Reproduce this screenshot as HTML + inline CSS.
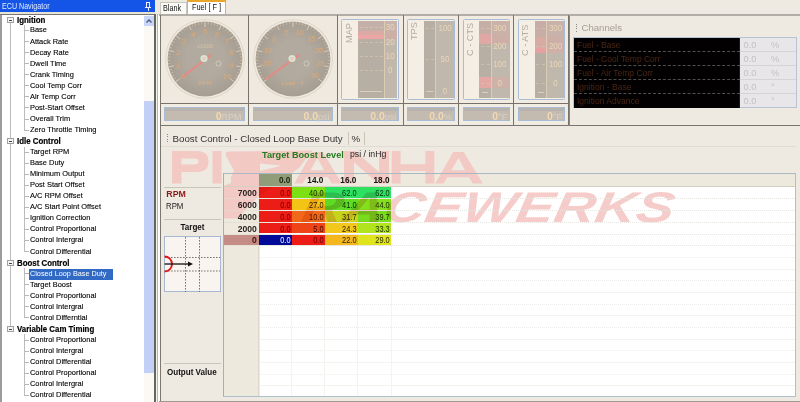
<!DOCTYPE html><html><head><meta charset="utf-8"><style>
*{margin:0;padding:0;box-sizing:border-box}
html,body{width:800px;height:402px;overflow:hidden;background:#EFEAE1;font-family:"Liberation Sans",sans-serif;position:relative}
.a{position:absolute}
.t{position:absolute;white-space:nowrap;line-height:1}
.ti{position:absolute;font-size:8px;color:#000;white-space:nowrap;line-height:1;transform-origin:0 0;transform:scaleX(0.93);-webkit-text-stroke-width:0.12px}
.tc{position:absolute;font-size:8.5px;font-weight:bold;color:#000;white-space:nowrap;line-height:1;transform-origin:0 0;transform:scaleX(0.925);-webkit-text-stroke-width:0.2px}
.mb{position:absolute;width:7px;height:6px;border:1px solid #a0a0a0;background:#f4f4f0}
.mb:after{content:"";position:absolute;left:1px;top:2px;width:3px;height:1px;background:#444}
.hl{position:absolute;height:0;width:5px;border-top:1px solid #b8b8b8}
.vl{position:absolute;width:0;border-left:1px solid #bcbcbc}
</style></head><body>
<div class="a" style="left:0;top:0;width:155px;height:12px;background:#1454E6"></div>
<div class="t" style="left:2px;top:2.8px;font-size:8.2px;color:#e4ecff;transform-origin:0 0;transform:scaleX(0.87)">ECU Navigator</div>
<div class="a" style="left:146px;top:2px;width:4px;height:6px;border:1px solid #eef;border-top-width:1px"></div>
<div class="a" style="left:145px;top:7px;width:6px;height:1px;background:#eef"></div>
<div class="a" style="left:147.5px;top:8px;width:1px;height:3px;background:#eef"></div>
<div class="a" style="left:0;top:12px;width:155px;height:2px;background:#e8e4d4"></div>
<div class="a" style="left:0;top:14px;width:155px;height:1px;background:#777"></div>
<div class="a" style="left:0;top:15px;width:155px;height:387px;background:#fff"></div>
<div class="a" style="left:0;top:15px;width:1.6px;height:387px;background:#9c9c9c"></div>
<div class="a" style="left:154.1px;top:14px;width:1.5px;height:388px;background:#626660"></div>
<div class="a" style="left:144px;top:15px;width:9.5px;height:387px;background:#faf9f4"></div>
<div class="a" style="left:144px;top:15.5px;width:9.5px;height:10px;background:#c8d5f6"></div>
<svg class="a" style="left:144px;top:15.5px" width="10" height="10"><path d="M2.5 6.5 L5 4 L7.5 6.5" stroke="#4a5c80" stroke-width="1.4" fill="none"/></svg>
<div class="a" style="left:144px;top:101px;width:9.5px;height:271.5px;background:#c2d0f8"></div>
<div class="vl" style="left:10px;top:23px;height:305px"></div>
<div class="vl" style="left:23.5px;top:25.0px;height:104.5px"></div>
<div class="vl" style="left:23.5px;top:146.6px;height:104.5px"></div>
<div class="vl" style="left:23.5px;top:268.1px;height:49.2px"></div>
<div class="vl" style="left:23.5px;top:334.4px;height:60.3px"></div>
<div class="mb" style="left:7px;top:16.5px"></div>
<div class="tc" style="left:17px;top:15.5px">Ignition</div>
<div class="hl" style="left:24px;top:30.0px"></div>
<div class="ti" style="left:30px;top:26.4px">Base</div>
<div class="hl" style="left:24px;top:41.1px"></div>
<div class="ti" style="left:30px;top:37.5px">Attack Rate</div>
<div class="hl" style="left:24px;top:52.2px"></div>
<div class="ti" style="left:30px;top:48.6px">Decay Rate</div>
<div class="hl" style="left:24px;top:63.2px"></div>
<div class="ti" style="left:30px;top:59.6px">Dwell Time</div>
<div class="hl" style="left:24px;top:74.2px"></div>
<div class="ti" style="left:30px;top:70.7px">Crank Timing</div>
<div class="hl" style="left:24px;top:85.3px"></div>
<div class="ti" style="left:30px;top:81.7px">Cool Temp Corr</div>
<div class="hl" style="left:24px;top:96.4px"></div>
<div class="ti" style="left:30px;top:92.8px">Air Temp Corr</div>
<div class="hl" style="left:24px;top:107.4px"></div>
<div class="ti" style="left:30px;top:103.8px">Post-Start Offset</div>
<div class="hl" style="left:24px;top:118.5px"></div>
<div class="ti" style="left:30px;top:114.9px">Overall Trim</div>
<div class="hl" style="left:24px;top:129.5px"></div>
<div class="ti" style="left:30px;top:125.9px">Zero Throttle Timing</div>
<div class="mb" style="left:7px;top:138.1px"></div>
<div class="tc" style="left:17px;top:137.1px">Idle Control</div>
<div class="hl" style="left:24px;top:151.6px"></div>
<div class="ti" style="left:30px;top:148.0px">Target RPM</div>
<div class="hl" style="left:24px;top:162.7px"></div>
<div class="ti" style="left:30px;top:159.1px">Base Duty</div>
<div class="hl" style="left:24px;top:173.7px"></div>
<div class="ti" style="left:30px;top:170.1px">Minimum Output</div>
<div class="hl" style="left:24px;top:184.8px"></div>
<div class="ti" style="left:30px;top:181.2px">Post Start Offset</div>
<div class="hl" style="left:24px;top:195.8px"></div>
<div class="ti" style="left:30px;top:192.2px">A/C RPM Offset</div>
<div class="hl" style="left:24px;top:206.9px"></div>
<div class="ti" style="left:30px;top:203.3px">A/C Start Point Offset</div>
<div class="hl" style="left:24px;top:217.9px"></div>
<div class="ti" style="left:30px;top:214.3px">Ignition Correction</div>
<div class="hl" style="left:24px;top:229.0px"></div>
<div class="ti" style="left:30px;top:225.4px">Control Proportional</div>
<div class="hl" style="left:24px;top:240.0px"></div>
<div class="ti" style="left:30px;top:236.4px">Control Intergral</div>
<div class="hl" style="left:24px;top:251.1px"></div>
<div class="ti" style="left:30px;top:247.5px">Control Differential</div>
<div class="mb" style="left:7px;top:259.6px"></div>
<div class="tc" style="left:17px;top:258.6px">Boost Control</div>
<div class="hl" style="left:24px;top:273.1px"></div>
<div class="a" style="left:29.2px;top:269.0px;width:84.3px;height:10.5px;background:#316AC5"></div>
<div class="ti" style="left:30px;top:269.5px;color:#fff;-webkit-text-stroke-width:0;transform:scaleX(0.91)">Closed Loop Base Duty</div>
<div class="hl" style="left:24px;top:284.2px"></div>
<div class="ti" style="left:30px;top:280.6px">Target Boost</div>
<div class="hl" style="left:24px;top:295.2px"></div>
<div class="ti" style="left:30px;top:291.6px">Control Proportional</div>
<div class="hl" style="left:24px;top:306.3px"></div>
<div class="ti" style="left:30px;top:302.7px">Control Intergral</div>
<div class="hl" style="left:24px;top:317.4px"></div>
<div class="ti" style="left:30px;top:313.8px">Control Differntial</div>
<div class="mb" style="left:7px;top:325.9px"></div>
<div class="tc" style="left:17px;top:324.9px">Variable Cam Timing</div>
<div class="hl" style="left:24px;top:339.5px"></div>
<div class="ti" style="left:30px;top:335.9px">Control Proportional</div>
<div class="hl" style="left:24px;top:350.5px"></div>
<div class="ti" style="left:30px;top:346.9px">Control Intergral</div>
<div class="hl" style="left:24px;top:361.6px"></div>
<div class="ti" style="left:30px;top:357.9px">Control Differential</div>
<div class="hl" style="left:24px;top:372.6px"></div>
<div class="ti" style="left:30px;top:369.0px">Control Proportional</div>
<div class="hl" style="left:24px;top:383.7px"></div>
<div class="ti" style="left:30px;top:380.1px">Control Intergral</div>
<div class="hl" style="left:24px;top:394.7px"></div>
<div class="ti" style="left:30px;top:391.1px">Control Differential</div>
<div class="a" style="left:155.6px;top:14px;width:1.2px;height:388px;background:#f4f4ea"></div>
<div class="a" style="left:156.8px;top:14px;width:1.1px;height:388px;background:#b4b4b2"></div>
<div class="a" style="left:157.9px;top:15px;width:2.1px;height:387px;background:#fbfbf8"></div>
<div class="a" style="left:159.5px;top:1.5px;width:27px;height:13px;background:#fbfaf6;border:1px solid #c8c6bc;border-bottom:none"></div>
<div class="t" style="left:163px;top:4.2px;font-size:8.4px;color:#111;transform-origin:0 0;transform:scaleX(0.86)">Blank</div>
<div class="a" style="left:186.5px;top:0;width:39.5px;height:15px;background:#fff;border:1px solid #b8b6aa;border-bottom:none;border-top:none"></div>
<div class="a" style="left:186.5px;top:0;width:39.5px;height:2px;background:#E8A62A"></div>
<div class="t" style="left:191.5px;top:2.6px;font-size:8.4px;color:#111;transform-origin:0 0;transform:scaleX(0.88)">Fuel [ F ]</div>
<div class="a" style="left:159px;top:14px;width:641px;height:1.5px;background:#b0aea6"></div>
<div class="a" style="left:226px;top:14px;width:574px;height:1.5px;background:#b0aea6"></div>
<div class="a" style="left:160px;top:15px;width:1.2px;height:387px;background:#7c7870"></div>
<div class="a" style="left:247.9px;top:15px;width:1.2px;height:110px;background:#77726b"></div>
<div class="a" style="left:336.9px;top:15px;width:1.2px;height:110px;background:#77726b"></div>
<div class="a" style="left:402.9px;top:15px;width:1.2px;height:110px;background:#77726b"></div>
<div class="a" style="left:457.9px;top:15px;width:1.2px;height:110px;background:#77726b"></div>
<div class="a" style="left:512.9px;top:15px;width:1.2px;height:110px;background:#77726b"></div>
<div class="a" style="left:567.9px;top:15px;width:1.2px;height:110px;background:#77726b"></div>
<div class="a" style="left:161px;top:102.7px;width:408px;height:1.2px;background:#77726b"></div>
<div class="a" style="left:161px;top:124.9px;width:639px;height:1.3px;background:#7a756e"></div>
<div class="a" style="left:161.5px;top:15.5px;width:86.5px;height:87px;background:#efe9df"></div>
<div class="a" style="left:249.0px;top:15.5px;width:88.0px;height:87px;background:#efe9df"></div>
<svg class="a" style="left:163.0px;top:16.5px" width="84" height="84" viewBox="-42 -42 84 84"><defs><radialGradient id="gf205"><stop offset="0.5" stop-color="#b3aa9f"/><stop offset="1" stop-color="#a79e93"/></radialGradient></defs><circle r="39.8" fill="#ddd3c6"/><circle r="39" fill="#f0e9de"/><circle r="37.4" fill="url(#gf205)"/><line x1="-29.16" y1="22.78" x2="-25.22" y2="19.70" stroke="#dccbb2" stroke-width="1.0"/><line x1="-31.07" y1="20.09" x2="-29.23" y2="18.89" stroke="#dccbb2" stroke-width="0.6"/><line x1="-32.74" y1="17.23" x2="-30.79" y2="16.21" stroke="#dccbb2" stroke-width="0.6"/><line x1="-34.15" y1="14.24" x2="-32.12" y2="13.40" stroke="#dccbb2" stroke-width="0.6"/><line x1="-35.28" y1="11.14" x2="-33.19" y2="10.48" stroke="#dccbb2" stroke-width="0.6"/><line x1="-36.14" y1="7.95" x2="-31.25" y2="6.87" stroke="#dccbb2" stroke-width="1.0"/><line x1="-36.70" y1="4.69" x2="-34.52" y2="4.41" stroke="#dccbb2" stroke-width="0.6"/><line x1="-36.97" y1="1.39" x2="-34.78" y2="1.31" stroke="#dccbb2" stroke-width="0.6"/><line x1="-36.95" y1="-1.91" x2="-34.75" y2="-1.80" stroke="#dccbb2" stroke-width="0.6"/><line x1="-36.63" y1="-5.20" x2="-34.45" y2="-4.89" stroke="#dccbb2" stroke-width="0.6"/><line x1="-36.02" y1="-8.45" x2="-31.15" y2="-7.31" stroke="#dccbb2" stroke-width="1.0"/><line x1="-35.12" y1="-11.63" x2="-33.04" y2="-10.94" stroke="#dccbb2" stroke-width="0.6"/><line x1="-33.95" y1="-14.72" x2="-31.93" y2="-13.84" stroke="#dccbb2" stroke-width="0.6"/><line x1="-32.50" y1="-17.69" x2="-30.57" y2="-16.64" stroke="#dccbb2" stroke-width="0.6"/><line x1="-30.79" y1="-20.52" x2="-28.96" y2="-19.30" stroke="#dccbb2" stroke-width="0.6"/><line x1="-28.84" y1="-23.18" x2="-24.94" y2="-20.05" stroke="#dccbb2" stroke-width="1.0"/><line x1="-26.65" y1="-25.67" x2="-25.07" y2="-24.14" stroke="#dccbb2" stroke-width="0.6"/><line x1="-24.25" y1="-27.94" x2="-22.81" y2="-26.28" stroke="#dccbb2" stroke-width="0.6"/><line x1="-21.66" y1="-29.99" x2="-20.38" y2="-28.21" stroke="#dccbb2" stroke-width="0.6"/><line x1="-18.90" y1="-31.81" x2="-17.78" y2="-29.92" stroke="#dccbb2" stroke-width="0.6"/><line x1="-15.99" y1="-33.37" x2="-13.83" y2="-28.86" stroke="#dccbb2" stroke-width="1.0"/><line x1="-12.95" y1="-34.66" x2="-12.18" y2="-32.60" stroke="#dccbb2" stroke-width="0.6"/><line x1="-9.80" y1="-35.68" x2="-9.22" y2="-33.56" stroke="#dccbb2" stroke-width="0.6"/><line x1="-6.58" y1="-36.41" x2="-6.19" y2="-34.25" stroke="#dccbb2" stroke-width="0.6"/><line x1="-3.30" y1="-36.85" x2="-3.11" y2="-34.66" stroke="#dccbb2" stroke-width="0.6"/><line x1="0.00" y1="-37.00" x2="0.00" y2="-32.00" stroke="#dccbb2" stroke-width="1.0"/><line x1="3.30" y1="-36.85" x2="3.11" y2="-34.66" stroke="#dccbb2" stroke-width="0.6"/><line x1="6.58" y1="-36.41" x2="6.19" y2="-34.25" stroke="#dccbb2" stroke-width="0.6"/><line x1="9.80" y1="-35.68" x2="9.22" y2="-33.56" stroke="#dccbb2" stroke-width="0.6"/><line x1="12.95" y1="-34.66" x2="12.18" y2="-32.60" stroke="#dccbb2" stroke-width="0.6"/><line x1="15.99" y1="-33.37" x2="13.83" y2="-28.86" stroke="#dccbb2" stroke-width="1.0"/><line x1="18.90" y1="-31.81" x2="17.78" y2="-29.92" stroke="#dccbb2" stroke-width="0.6"/><line x1="21.66" y1="-29.99" x2="20.38" y2="-28.21" stroke="#dccbb2" stroke-width="0.6"/><line x1="24.25" y1="-27.94" x2="22.81" y2="-26.28" stroke="#dccbb2" stroke-width="0.6"/><line x1="26.65" y1="-25.67" x2="25.07" y2="-24.14" stroke="#dccbb2" stroke-width="0.6"/><line x1="28.84" y1="-23.18" x2="24.94" y2="-20.05" stroke="#dccbb2" stroke-width="1.0"/><line x1="30.79" y1="-20.52" x2="28.96" y2="-19.30" stroke="#dccbb2" stroke-width="0.6"/><line x1="32.50" y1="-17.69" x2="30.57" y2="-16.64" stroke="#dccbb2" stroke-width="0.6"/><line x1="33.95" y1="-14.72" x2="31.93" y2="-13.84" stroke="#dccbb2" stroke-width="0.6"/><line x1="35.12" y1="-11.63" x2="33.04" y2="-10.94" stroke="#dccbb2" stroke-width="0.6"/><line x1="36.02" y1="-8.45" x2="31.15" y2="-7.31" stroke="#dccbb2" stroke-width="1.0"/><line x1="36.63" y1="-5.20" x2="34.45" y2="-4.89" stroke="#dccbb2" stroke-width="0.6"/><line x1="36.95" y1="-1.91" x2="34.75" y2="-1.80" stroke="#dccbb2" stroke-width="0.6"/><line x1="36.97" y1="1.39" x2="34.78" y2="1.31" stroke="#dccbb2" stroke-width="0.6"/><line x1="36.70" y1="4.69" x2="34.52" y2="4.41" stroke="#dccbb2" stroke-width="0.6"/><line x1="36.14" y1="7.95" x2="31.25" y2="6.87" stroke="#dccbb2" stroke-width="1.0"/><line x1="35.28" y1="11.14" x2="33.19" y2="10.48" stroke="#dccbb2" stroke-width="0.6"/><line x1="34.15" y1="14.24" x2="32.12" y2="13.40" stroke="#dccbb2" stroke-width="0.6"/><line x1="32.74" y1="17.23" x2="30.79" y2="16.21" stroke="#dccbb2" stroke-width="0.6"/><line x1="31.07" y1="20.09" x2="29.23" y2="18.89" stroke="#dccbb2" stroke-width="0.6"/><line x1="29.16" y1="22.78" x2="25.22" y2="19.70" stroke="#dccbb2" stroke-width="1.0"/><text x="-21.67" y="19.63" font-size="7.2" fill="#e0a870" text-anchor="middle" font-family="Liberation Sans" font-style="italic">0</text><text x="-26.86" y="8.61" font-size="7.2" fill="#e0a870" text-anchor="middle" font-family="Liberation Sans" font-style="italic">1</text><text x="-26.77" y="-3.58" font-size="7.2" fill="#e0a870" text-anchor="middle" font-family="Liberation Sans" font-style="italic">2</text><text x="-21.43" y="-14.53" font-size="7.2" fill="#e0a870" text-anchor="middle" font-family="Liberation Sans" font-style="italic">3</text><text x="-11.88" y="-22.10" font-size="7.2" fill="#e0a870" text-anchor="middle" font-family="Liberation Sans" font-style="italic">4</text><text x="0.00" y="-24.80" font-size="7.2" fill="#e0a870" text-anchor="middle" font-family="Liberation Sans" font-style="italic">5</text><text x="11.88" y="-22.10" font-size="7.2" fill="#e0a870" text-anchor="middle" font-family="Liberation Sans" font-style="italic">6</text><text x="21.43" y="-14.53" font-size="7.2" fill="#e0a870" text-anchor="middle" font-family="Liberation Sans" font-style="italic">7</text><text x="26.77" y="-3.58" font-size="7.2" fill="#e0a870" text-anchor="middle" font-family="Liberation Sans" font-style="italic">8</text><text x="26.86" y="8.61" font-size="7.2" fill="#e0a870" text-anchor="middle" font-family="Liberation Sans" font-style="italic">9</text><text x="21.67" y="19.63" font-size="7.2" fill="#e0a870" text-anchor="middle" font-family="Liberation Sans" font-style="italic">10</text><text x="0" y="-11.5" font-size="5.8" fill="#d6c2a4" text-anchor="middle" font-family="Liberation Sans">x1000</text><text x="0" y="25.5" font-size="6.2" fill="#dcae80" text-anchor="middle" font-family="Liberation Sans">RPM</text><line x1="-22.0" y1="17.5" x2="6.0" y2="-4.0" stroke="#e88a84" stroke-width="2" stroke-linecap="round"/><circle cx="-1" cy="-0.5" r="3.6" fill="#d8e4d0"/><circle cx="-1" cy="-0.5" r="1.6" fill="#eec4bc"/><circle cx="13.5" cy="4.5" r="2.6" fill="none" stroke="#d4ccc0" stroke-width="0.9"/></svg>
<svg class="a" style="left:250.5px;top:17.0px" width="84" height="84" viewBox="-42 -42 84 84"><defs><radialGradient id="gf292"><stop offset="0.5" stop-color="#b3aa9f"/><stop offset="1" stop-color="#a79e93"/></radialGradient></defs><circle r="39.8" fill="#ddd3c6"/><circle r="39" fill="#f0e9de"/><circle r="37.4" fill="url(#gf292)"/><line x1="-29.16" y1="22.78" x2="-25.22" y2="19.70" stroke="#dccbb2" stroke-width="1.0"/><line x1="-31.07" y1="20.09" x2="-29.23" y2="18.89" stroke="#dccbb2" stroke-width="0.6"/><line x1="-32.74" y1="17.23" x2="-30.79" y2="16.21" stroke="#dccbb2" stroke-width="0.6"/><line x1="-34.15" y1="14.24" x2="-32.12" y2="13.40" stroke="#dccbb2" stroke-width="0.6"/><line x1="-35.28" y1="11.14" x2="-33.19" y2="10.48" stroke="#dccbb2" stroke-width="0.6"/><line x1="-36.14" y1="7.95" x2="-31.25" y2="6.87" stroke="#dccbb2" stroke-width="1.0"/><line x1="-36.70" y1="4.69" x2="-34.52" y2="4.41" stroke="#dccbb2" stroke-width="0.6"/><line x1="-36.97" y1="1.39" x2="-34.78" y2="1.31" stroke="#dccbb2" stroke-width="0.6"/><line x1="-36.95" y1="-1.91" x2="-34.75" y2="-1.80" stroke="#dccbb2" stroke-width="0.6"/><line x1="-36.63" y1="-5.20" x2="-34.45" y2="-4.89" stroke="#dccbb2" stroke-width="0.6"/><line x1="-36.02" y1="-8.45" x2="-31.15" y2="-7.31" stroke="#dccbb2" stroke-width="1.0"/><line x1="-35.12" y1="-11.63" x2="-33.04" y2="-10.94" stroke="#dccbb2" stroke-width="0.6"/><line x1="-33.95" y1="-14.72" x2="-31.93" y2="-13.84" stroke="#dccbb2" stroke-width="0.6"/><line x1="-32.50" y1="-17.69" x2="-30.57" y2="-16.64" stroke="#dccbb2" stroke-width="0.6"/><line x1="-30.79" y1="-20.52" x2="-28.96" y2="-19.30" stroke="#dccbb2" stroke-width="0.6"/><line x1="-28.84" y1="-23.18" x2="-24.94" y2="-20.05" stroke="#dccbb2" stroke-width="1.0"/><line x1="-26.65" y1="-25.67" x2="-25.07" y2="-24.14" stroke="#dccbb2" stroke-width="0.6"/><line x1="-24.25" y1="-27.94" x2="-22.81" y2="-26.28" stroke="#dccbb2" stroke-width="0.6"/><line x1="-21.66" y1="-29.99" x2="-20.38" y2="-28.21" stroke="#dccbb2" stroke-width="0.6"/><line x1="-18.90" y1="-31.81" x2="-17.78" y2="-29.92" stroke="#dccbb2" stroke-width="0.6"/><line x1="-15.99" y1="-33.37" x2="-13.83" y2="-28.86" stroke="#dccbb2" stroke-width="1.0"/><line x1="-12.95" y1="-34.66" x2="-12.18" y2="-32.60" stroke="#dccbb2" stroke-width="0.6"/><line x1="-9.80" y1="-35.68" x2="-9.22" y2="-33.56" stroke="#dccbb2" stroke-width="0.6"/><line x1="-6.58" y1="-36.41" x2="-6.19" y2="-34.25" stroke="#dccbb2" stroke-width="0.6"/><line x1="-3.30" y1="-36.85" x2="-3.11" y2="-34.66" stroke="#dccbb2" stroke-width="0.6"/><line x1="0.00" y1="-37.00" x2="0.00" y2="-32.00" stroke="#dccbb2" stroke-width="1.0"/><line x1="3.30" y1="-36.85" x2="3.11" y2="-34.66" stroke="#dccbb2" stroke-width="0.6"/><line x1="6.58" y1="-36.41" x2="6.19" y2="-34.25" stroke="#dccbb2" stroke-width="0.6"/><line x1="9.80" y1="-35.68" x2="9.22" y2="-33.56" stroke="#dccbb2" stroke-width="0.6"/><line x1="12.95" y1="-34.66" x2="12.18" y2="-32.60" stroke="#dccbb2" stroke-width="0.6"/><line x1="15.99" y1="-33.37" x2="13.83" y2="-28.86" stroke="#dccbb2" stroke-width="1.0"/><line x1="18.90" y1="-31.81" x2="17.78" y2="-29.92" stroke="#dccbb2" stroke-width="0.6"/><line x1="21.66" y1="-29.99" x2="20.38" y2="-28.21" stroke="#dccbb2" stroke-width="0.6"/><line x1="24.25" y1="-27.94" x2="22.81" y2="-26.28" stroke="#dccbb2" stroke-width="0.6"/><line x1="26.65" y1="-25.67" x2="25.07" y2="-24.14" stroke="#dccbb2" stroke-width="0.6"/><line x1="28.84" y1="-23.18" x2="24.94" y2="-20.05" stroke="#dccbb2" stroke-width="1.0"/><line x1="30.79" y1="-20.52" x2="28.96" y2="-19.30" stroke="#dccbb2" stroke-width="0.6"/><line x1="32.50" y1="-17.69" x2="30.57" y2="-16.64" stroke="#dccbb2" stroke-width="0.6"/><line x1="33.95" y1="-14.72" x2="31.93" y2="-13.84" stroke="#dccbb2" stroke-width="0.6"/><line x1="35.12" y1="-11.63" x2="33.04" y2="-10.94" stroke="#dccbb2" stroke-width="0.6"/><line x1="36.02" y1="-8.45" x2="31.15" y2="-7.31" stroke="#dccbb2" stroke-width="1.0"/><line x1="36.63" y1="-5.20" x2="34.45" y2="-4.89" stroke="#dccbb2" stroke-width="0.6"/><line x1="36.95" y1="-1.91" x2="34.75" y2="-1.80" stroke="#dccbb2" stroke-width="0.6"/><line x1="36.97" y1="1.39" x2="34.78" y2="1.31" stroke="#dccbb2" stroke-width="0.6"/><line x1="36.70" y1="4.69" x2="34.52" y2="4.41" stroke="#dccbb2" stroke-width="0.6"/><line x1="36.14" y1="7.95" x2="31.25" y2="6.87" stroke="#dccbb2" stroke-width="1.0"/><line x1="35.28" y1="11.14" x2="33.19" y2="10.48" stroke="#dccbb2" stroke-width="0.6"/><line x1="34.15" y1="14.24" x2="32.12" y2="13.40" stroke="#dccbb2" stroke-width="0.6"/><line x1="32.74" y1="17.23" x2="30.79" y2="16.21" stroke="#dccbb2" stroke-width="0.6"/><line x1="31.07" y1="20.09" x2="29.23" y2="18.89" stroke="#dccbb2" stroke-width="0.6"/><line x1="29.16" y1="22.78" x2="25.22" y2="19.70" stroke="#dccbb2" stroke-width="1.0"/><text x="-27.11" y="7.29" font-size="7.2" fill="#e0a870" text-anchor="middle" font-family="Liberation Sans" font-style="italic">-20</text><text x="-26.03" y="-6.16" font-size="7.2" fill="#e0a870" text-anchor="middle" font-family="Liberation Sans" font-style="italic">-10</text><text x="-18.68" y="-17.48" font-size="7.2" fill="#e0a870" text-anchor="middle" font-family="Liberation Sans" font-style="italic">0</text><text x="-6.84" y="-23.94" font-size="7.2" fill="#e0a870" text-anchor="middle" font-family="Liberation Sans" font-style="italic">5</text><text x="6.65" y="-23.98" font-size="7.2" fill="#e0a870" text-anchor="middle" font-family="Liberation Sans" font-style="italic">10</text><text x="18.54" y="-17.61" font-size="7.2" fill="#e0a870" text-anchor="middle" font-family="Liberation Sans" font-style="italic">15</text><text x="25.97" y="-6.34" font-size="7.2" fill="#e0a870" text-anchor="middle" font-family="Liberation Sans" font-style="italic">20</text><text x="27.15" y="7.10" font-size="7.2" fill="#e0a870" text-anchor="middle" font-family="Liberation Sans" font-style="italic">25</text><text x="21.79" y="19.48" font-size="7.2" fill="#e0a870" text-anchor="middle" font-family="Liberation Sans" font-style="italic">30</text><text x="0" y="-11.5" font-size="5.8" fill="#d6c2a4" text-anchor="middle" font-family="Liberation Sans"></text><text x="0" y="25.5" font-size="6.2" fill="#dcae80" text-anchor="middle" font-family="Liberation Sans">Load - F</text><line x1="-27.0" y1="20.0" x2="6.0" y2="-4.0" stroke="#e88a84" stroke-width="2" stroke-linecap="round"/><circle cx="-1" cy="-0.5" r="3.6" fill="#d8e4d0"/><circle cx="-1" cy="-0.5" r="1.6" fill="#eec4bc"/><circle cx="13.5" cy="4.5" r="2.6" fill="none" stroke="#d4ccc0" stroke-width="0.9"/></svg>
<div class="a" style="left:338.2px;top:15.5px;width:64.8px;height:87px;background:#f1ebe1"></div>
<div class="a" style="left:341.0px;top:19px;width:58.3px;height:81px;border:1px solid #a9bcd6;border-radius:1.5px;background:#f4eee4"></div>
<div class="a" style="left:358.4px;top:21.4px;width:25.7px;height:76.5px;background:#b8afa4"></div>
<div class="a" style="left:384.1px;top:21.4px;width:12.5px;height:76.5px;background:#c0b8ad"></div>
<div class="a" style="left:358.4px;top:21.4px;width:25.7px;height:9.4px;background:#c4b0a8"></div>
<div class="a" style="left:384.1px;top:21.4px;width:12.5px;height:9.4px;background:#c8b4ac"></div>
<div class="a" style="left:358.4px;top:30.8px;width:25.7px;height:4.5px;background:#dcaaa4"></div>
<div class="a" style="left:384.1px;top:30.8px;width:12.5px;height:4.5px;background:#ccb0a8"></div>
<div class="a" style="left:358.4px;top:35.3px;width:25.7px;height:3.5px;background:#eca4a4"></div>
<div class="a" style="left:384.1px;top:35.3px;width:12.5px;height:3.5px;background:#ccb0a8"></div>
<div class="a" style="left:383.7px;top:21.4px;width:0.8px;height:76.5px;background:#dcccb6"></div>
<div class="a" style="left:359.9px;top:26.9px;width:22.7px;height:0;border-top:1px dashed #d4c4b0;opacity:0.8"></div>
<div class="t" style="left:384.1px;top:23.0px;width:12.5px;text-align:center;font-size:8.8px;color:#ead6b6;transform:scaleX(0.9)">30</div>
<div class="a" style="left:359.9px;top:42.1px;width:22.7px;height:0;border-top:1px dashed #d4c4b0;opacity:0.8"></div>
<div class="t" style="left:384.1px;top:38.2px;width:12.5px;text-align:center;font-size:8.8px;color:#ead6b6;transform:scaleX(0.9)">20</div>
<div class="a" style="left:359.9px;top:55.5px;width:22.7px;height:0;border-top:1px dashed #d4c4b0;opacity:0.8"></div>
<div class="t" style="left:384.1px;top:51.6px;width:12.5px;text-align:center;font-size:8.8px;color:#ead6b6;transform:scaleX(0.9)">10</div>
<div class="a" style="left:359.9px;top:69.5px;width:22.7px;height:0;border-top:1px dashed #d4c4b0;opacity:0.8"></div>
<div class="t" style="left:384.1px;top:65.6px;width:12.5px;text-align:center;font-size:8.8px;color:#ead6b6;transform:scaleX(0.9)">0</div>
<div class="a" style="left:360.0px;top:91.0px;width:22.0px;height:1px;background:#dccfbe"></div>
<div class="t" style="left:344.5px;top:42.7px;font-size:9.2px;color:#b3aba0;transform-origin:0 0;transform:rotate(-90deg)">MAP</div>
<div class="a" style="left:404.0px;top:15.5px;width:54.0px;height:87px;background:#f1ebe1"></div>
<div class="a" style="left:406.7px;top:19px;width:48.1px;height:81px;border:1px solid #a9bcd6;border-radius:1.5px;background:#f4eee4"></div>
<div class="a" style="left:424.0px;top:21.4px;width:11.8px;height:76.5px;background:#b8afa4"></div>
<div class="a" style="left:435.8px;top:21.4px;width:18.0px;height:76.5px;background:#c0b8ad"></div>
<div class="a" style="left:435.4px;top:21.4px;width:0.8px;height:76.5px;background:#dcccb6"></div>
<div class="a" style="left:425.5px;top:27.5px;width:8.8px;height:0;border-top:1px dashed #d4c4b0;opacity:0.8"></div>
<div class="t" style="left:435.8px;top:23.6px;width:18.0px;text-align:center;font-size:8.8px;color:#ead6b6;transform:scaleX(0.9)">100</div>
<div class="a" style="left:425.5px;top:59.0px;width:8.8px;height:0;border-top:1px dashed #d4c4b0;opacity:0.8"></div>
<div class="t" style="left:435.8px;top:55.1px;width:18.0px;text-align:center;font-size:8.8px;color:#ead6b6;transform:scaleX(0.9)">50</div>
<div class="a" style="left:425.5px;top:91.0px;width:8.8px;height:0;border-top:1px dashed #d4c4b0;opacity:0.8"></div>
<div class="t" style="left:435.8px;top:87.1px;width:18.0px;text-align:center;font-size:8.8px;color:#ead6b6;transform:scaleX(0.9)">0</div>
<div class="a" style="left:427.0px;top:91.0px;width:6.0px;height:1px;background:#dccfbe"></div>
<div class="t" style="left:410.2px;top:40.0px;font-size:9.2px;color:#b3aba0;transform-origin:0 0;transform:rotate(-90deg)">TPS</div>
<div class="a" style="left:459.0px;top:15.5px;width:54.0px;height:87px;background:#f1ebe1"></div>
<div class="a" style="left:462.5px;top:19px;width:47.7px;height:81px;border:1px solid #a9bcd6;border-radius:1.5px;background:#f4eee4"></div>
<div class="a" style="left:479.4px;top:21.4px;width:11.7px;height:76.5px;background:#b8afa4"></div>
<div class="a" style="left:491.1px;top:21.4px;width:17.5px;height:76.5px;background:#c0b8ad"></div>
<div class="a" style="left:479.4px;top:21.4px;width:11.7px;height:13.0px;background:#c4aea6"></div>
<div class="a" style="left:491.1px;top:21.4px;width:17.5px;height:13.0px;background:#c8b2aa"></div>
<div class="a" style="left:479.4px;top:34.4px;width:11.7px;height:9.8px;background:#e0a8a4"></div>
<div class="a" style="left:491.1px;top:34.4px;width:17.5px;height:9.8px;background:#ccb0a8"></div>
<div class="a" style="left:479.4px;top:77.0px;width:11.7px;height:11.2px;background:#e4a8a4"></div>
<div class="a" style="left:491.1px;top:77.0px;width:17.5px;height:11.2px;background:#ceb2aa"></div>
<div class="a" style="left:490.7px;top:21.4px;width:0.8px;height:76.5px;background:#dcccb6"></div>
<div class="a" style="left:480.9px;top:27.5px;width:8.7px;height:0;border-top:1px dashed #d4c4b0;opacity:0.8"></div>
<div class="t" style="left:491.1px;top:23.6px;width:17.5px;text-align:center;font-size:8.8px;color:#ead6b6;transform:scaleX(0.9)">300</div>
<div class="a" style="left:480.9px;top:45.8px;width:8.7px;height:0;border-top:1px dashed #d4c4b0;opacity:0.8"></div>
<div class="t" style="left:491.1px;top:41.9px;width:17.5px;text-align:center;font-size:8.8px;color:#ead6b6;transform:scaleX(0.9)">200</div>
<div class="a" style="left:480.9px;top:64.0px;width:8.7px;height:0;border-top:1px dashed #d4c4b0;opacity:0.8"></div>
<div class="t" style="left:491.1px;top:60.1px;width:17.5px;text-align:center;font-size:8.8px;color:#ead6b6;transform:scaleX(0.9)">100</div>
<div class="a" style="left:480.9px;top:82.5px;width:8.7px;height:0;border-top:1px dashed #d4c4b0;opacity:0.8"></div>
<div class="t" style="left:491.1px;top:78.6px;width:17.5px;text-align:center;font-size:8.8px;color:#ead6b6;transform:scaleX(0.9)">0</div>
<div class="a" style="left:482.0px;top:91.5px;width:6.0px;height:1px;background:#dccfbe"></div>
<div class="t" style="left:465.8px;top:56.0px;font-size:9.2px;color:#b3aba0;transform-origin:0 0;transform:rotate(-90deg)">C - CTS</div>
<div class="a" style="left:514.0px;top:15.5px;width:54.2px;height:87px;background:#f1ebe1"></div>
<div class="a" style="left:517.7px;top:19px;width:47.3px;height:81px;border:1px solid #a9bcd6;border-radius:1.5px;background:#f4eee4"></div>
<div class="a" style="left:534.8px;top:21.4px;width:11.8px;height:76.5px;background:#b8afa4"></div>
<div class="a" style="left:546.6px;top:21.4px;width:17.0px;height:76.5px;background:#c0b8ad"></div>
<div class="a" style="left:534.8px;top:21.4px;width:11.8px;height:16.0px;background:#c6aea6"></div>
<div class="a" style="left:546.6px;top:21.4px;width:17.0px;height:16.0px;background:#c8b2aa"></div>
<div class="a" style="left:534.8px;top:37.4px;width:11.8px;height:10.6px;background:#d8aaa4"></div>
<div class="a" style="left:546.6px;top:37.4px;width:17.0px;height:10.6px;background:#ccb0a8"></div>
<div class="a" style="left:534.8px;top:48.0px;width:11.8px;height:5.2px;background:#e6a2a2"></div>
<div class="a" style="left:546.6px;top:48.0px;width:17.0px;height:5.2px;background:#d0b0a8"></div>
<div class="a" style="left:546.2px;top:21.4px;width:0.8px;height:76.5px;background:#dcccb6"></div>
<div class="a" style="left:536.3px;top:27.5px;width:8.8px;height:0;border-top:1px dashed #d4c4b0;opacity:0.8"></div>
<div class="t" style="left:546.6px;top:23.6px;width:17.0px;text-align:center;font-size:8.8px;color:#ead6b6;transform:scaleX(0.9)">300</div>
<div class="a" style="left:536.3px;top:45.8px;width:8.8px;height:0;border-top:1px dashed #d4c4b0;opacity:0.8"></div>
<div class="t" style="left:546.6px;top:41.9px;width:17.0px;text-align:center;font-size:8.8px;color:#ead6b6;transform:scaleX(0.9)">200</div>
<div class="a" style="left:536.3px;top:64.0px;width:8.8px;height:0;border-top:1px dashed #d4c4b0;opacity:0.8"></div>
<div class="t" style="left:546.6px;top:60.1px;width:17.0px;text-align:center;font-size:8.8px;color:#ead6b6;transform:scaleX(0.9)">100</div>
<div class="a" style="left:536.3px;top:82.5px;width:8.8px;height:0;border-top:1px dashed #d4c4b0;opacity:0.8"></div>
<div class="t" style="left:546.6px;top:78.6px;width:17.0px;text-align:center;font-size:8.8px;color:#ead6b6;transform:scaleX(0.9)">0</div>
<div class="a" style="left:538.0px;top:91.5px;width:6.0px;height:1px;background:#dccfbe"></div>
<div class="t" style="left:521.0px;top:56.0px;font-size:9.2px;color:#b3aba0;transform-origin:0 0;transform:rotate(-90deg)">C - ATS</div>
<div class="a" style="left:161.0px;top:103.8px;width:86.5px;height:20.6px;background:#f1ece2"></div>
<div class="a" style="left:164.0px;top:107.4px;width:80.5px;height:14px;border:1px solid #a9bcd6;background:#c3bbb0"></div>
<div class="a" style="left:165.0px;top:108.4px;width:78.5px;height:2.5px;background:#b9b3ae"></div>
<div class="t" style="right:558.5px;top:110.5px;font-size:10.5px;"><b style="color:#f1d9b3">0</b><span style="color:#d9d0c6;font-size:9px">RPM</span></div>
<div class="a" style="left:249.5px;top:103.8px;width:86.0px;height:20.6px;background:#f1ece2"></div>
<div class="a" style="left:252.5px;top:107.4px;width:80.0px;height:14px;border:1px solid #a9bcd6;background:#c3bbb0"></div>
<div class="a" style="left:253.5px;top:108.4px;width:78.0px;height:2.5px;background:#b9b3ae"></div>
<div class="t" style="right:470.5px;top:110.5px;font-size:10.5px;"><b style="color:#f1d9b3">0.0</b><span style="color:#d9d0c6;font-size:9px">psi</span></div>
<div class="a" style="left:338.0px;top:103.8px;width:64.3px;height:20.6px;background:#f1ece2"></div>
<div class="a" style="left:341.0px;top:107.4px;width:58.3px;height:14px;border:1px solid #a9bcd6;background:#c3bbb0"></div>
<div class="a" style="left:342.0px;top:108.4px;width:56.3px;height:2.5px;background:#b9b3ae"></div>
<div class="t" style="right:403.7px;top:110.5px;font-size:10.5px;"><b style="color:#f1d9b3">0.0</b><span style="color:#d9d0c6;font-size:9px">psi</span></div>
<div class="a" style="left:403.7px;top:103.8px;width:54.1px;height:20.6px;background:#f1ece2"></div>
<div class="a" style="left:406.7px;top:107.4px;width:48.1px;height:14px;border:1px solid #a9bcd6;background:#c3bbb0"></div>
<div class="a" style="left:407.7px;top:108.4px;width:46.1px;height:2.5px;background:#b9b3ae"></div>
<div class="t" style="right:348.2px;top:110.5px;font-size:10.5px;"><b style="color:#f1d9b3">0.0</b><span style="color:#d9d0c6;font-size:9px">%</span></div>
<div class="a" style="left:459.5px;top:103.8px;width:53.7px;height:20.6px;background:#f1ece2"></div>
<div class="a" style="left:462.5px;top:107.4px;width:47.7px;height:14px;border:1px solid #a9bcd6;background:#c3bbb0"></div>
<div class="a" style="left:463.5px;top:108.4px;width:45.7px;height:2.5px;background:#b9b3ae"></div>
<div class="t" style="right:292.8px;top:110.5px;font-size:10.5px;"><b style="color:#f1d9b3">0</b><span style="color:#d9d0c6;font-size:9px">&deg;F</span></div>
<div class="a" style="left:514.7px;top:103.8px;width:53.3px;height:20.6px;background:#f1ece2"></div>
<div class="a" style="left:517.7px;top:107.4px;width:47.3px;height:14px;border:1px solid #a9bcd6;background:#c3bbb0"></div>
<div class="a" style="left:518.7px;top:108.4px;width:45.3px;height:2.5px;background:#b9b3ae"></div>
<div class="t" style="right:238.0px;top:110.5px;font-size:10.5px;"><b style="color:#f1d9b3">0</b><span style="color:#d9d0c6;font-size:9px">&deg;F</span></div>
<div class="a" style="left:568.5px;top:15.5px;width:1.2px;height:110px;background:#8a857d"></div>
<div class="a" style="left:575.5px;top:24.0px;width:1px;height:1px;background:#8a8a8a"></div>
<div class="a" style="left:575.5px;top:26.2px;width:1px;height:1px;background:#8a8a8a"></div>
<div class="a" style="left:575.5px;top:28.4px;width:1px;height:1px;background:#8a8a8a"></div>
<div class="a" style="left:575.5px;top:30.6px;width:1px;height:1px;background:#8a8a8a"></div>
<div class="t" style="left:581.5px;top:22.7px;font-size:9.6px;color:#a39e94">Channels</div>
<div class="a" style="left:573px;top:36.5px;width:224px;height:71.5px;border:1px solid #b4c4d4;background:#e9e6e9"></div>
<div class="a" style="left:574px;top:37.5px;width:166px;height:14px;background:#020000"></div>
<div class="a" style="left:738.8px;top:37.5px;width:1.5px;height:14px;background:#4a0404"></div>
<div class="t" style="left:577px;top:40.5px;font-size:9.3px;color:#4c2616;transform-origin:0 0;transform:scaleX(0.915)">Fuel - Base</div>
<div class="t" style="left:743.5px;top:40.5px;font-size:9.3px;color:#c4c0c4">0.0</div>
<div class="t" style="left:771px;top:40.5px;font-size:9.3px;color:#c4c0c4">%</div>
<div class="a" style="left:574px;top:51.5px;width:166px;height:14px;background:#020000"></div>
<div class="a" style="left:738.8px;top:51.5px;width:1.5px;height:14px;background:#4a0404"></div>
<div class="a" style="left:574px;top:51.0px;width:166px;height:0;border-top:1px dashed #6c6a68;opacity:0.75"></div>
<div class="a" style="left:740px;top:51.0px;width:56px;height:1px;background:#d6d2d6"></div>
<div class="t" style="left:577px;top:54.5px;font-size:9.3px;color:#4c2616;transform-origin:0 0;transform:scaleX(0.915)">Fuel - Cool Temp Corr</div>
<div class="t" style="left:743.5px;top:54.5px;font-size:9.3px;color:#c4c0c4">0.0</div>
<div class="t" style="left:771px;top:54.5px;font-size:9.3px;color:#c4c0c4">%</div>
<div class="a" style="left:574px;top:65.5px;width:166px;height:14px;background:#020000"></div>
<div class="a" style="left:738.8px;top:65.5px;width:1.5px;height:14px;background:#4a0404"></div>
<div class="a" style="left:574px;top:65.0px;width:166px;height:0;border-top:1px dashed #6c6a68;opacity:0.75"></div>
<div class="a" style="left:740px;top:65.0px;width:56px;height:1px;background:#d6d2d6"></div>
<div class="t" style="left:577px;top:68.5px;font-size:9.3px;color:#4c2616;transform-origin:0 0;transform:scaleX(0.915)">Fuel - Air Temp Corr</div>
<div class="t" style="left:743.5px;top:68.5px;font-size:9.3px;color:#c4c0c4">0.0</div>
<div class="t" style="left:771px;top:68.5px;font-size:9.3px;color:#c4c0c4">%</div>
<div class="a" style="left:574px;top:79.5px;width:166px;height:14px;background:#020000"></div>
<div class="a" style="left:738.8px;top:79.5px;width:1.5px;height:14px;background:#4a0404"></div>
<div class="a" style="left:574px;top:79.0px;width:166px;height:0;border-top:1px dashed #6c6a68;opacity:0.75"></div>
<div class="a" style="left:740px;top:79.0px;width:56px;height:1px;background:#d6d2d6"></div>
<div class="t" style="left:577px;top:82.5px;font-size:9.3px;color:#4c2616;transform-origin:0 0;transform:scaleX(0.915)">Ignition - Base</div>
<div class="t" style="left:743.5px;top:82.5px;font-size:9.3px;color:#c4c0c4">0.0</div>
<div class="t" style="left:771px;top:82.5px;font-size:9.3px;color:#c4c0c4">&deg;</div>
<div class="a" style="left:574px;top:93.5px;width:166px;height:14px;background:#020000"></div>
<div class="a" style="left:738.8px;top:93.5px;width:1.5px;height:14px;background:#4a0404"></div>
<div class="a" style="left:574px;top:93.0px;width:166px;height:0;border-top:1px dashed #6c6a68;opacity:0.75"></div>
<div class="a" style="left:740px;top:93.0px;width:56px;height:1px;background:#d6d2d6"></div>
<div class="t" style="left:577px;top:96.5px;font-size:9.3px;color:#4c2616;transform-origin:0 0;transform:scaleX(0.915)">Ignition Advance</div>
<div class="t" style="left:743.5px;top:96.5px;font-size:9.3px;color:#c4c0c4">0.0</div>
<div class="t" style="left:771px;top:96.5px;font-size:9.3px;color:#c4c0c4">&deg;</div>
<div class="a" style="left:167px;top:134.0px;width:1px;height:1px;background:#8a8a8a"></div>
<div class="a" style="left:167px;top:136.4px;width:1px;height:1px;background:#8a8a8a"></div>
<div class="a" style="left:167px;top:138.8px;width:1px;height:1px;background:#8a8a8a"></div>
<div class="a" style="left:167px;top:141.2px;width:1px;height:1px;background:#8a8a8a"></div>
<div class="t" style="left:172.5px;top:133.6px;font-size:9.75px;color:#333">Boost Control - Closed Loop Base Duty</div>
<div class="a" style="left:347.5px;top:131.5px;width:1px;height:13.5px;background:#cbc7b8"></div>
<div class="t" style="left:351.5px;top:133.6px;font-size:9.75px;color:#333">%</div>
<div class="a" style="left:364px;top:131.5px;width:1px;height:13.5px;background:#cbc7b8"></div>
<div class="a" style="left:161px;top:145.5px;width:635px;height:1px;background:#e0dcd2"></div>
<div class="a" style="left:164px;top:187.3px;width:57px;height:1px;background:#c9c5b6"></div>
<div class="t" style="left:166.3px;top:190.2px;font-size:8.8px;font-weight:bold;color:#8c1a1a">RPM</div>
<div class="t" style="left:166.3px;top:201.6px;font-size:8.6px;color:#222;transform-origin:0 0;transform:scaleX(0.91)">RPM</div>
<div class="a" style="left:164px;top:218.8px;width:57px;height:1px;background:#c9c5b6"></div>
<div class="t" style="left:164px;top:222.8px;width:57px;text-align:center;font-size:8.8px;font-weight:bold;color:#111;transform-origin:50% 0;transform:scaleX(0.92)">Target</div>
<svg class="a" style="left:164px;top:236px" width="57" height="57"><rect x="0.5" y="0.5" width="56" height="55" fill="#f9f4ef" stroke="#a7b9d2"/><path d="M21.5 1V56 M35.5 1V56 M1 21.5H56 M1 35H56" stroke="#555" stroke-width="0.8" stroke-dasharray="1.6 1.4" fill="none"/><path d="M0.5 20.5 A7.5 7.5 0 0 1 0.5 35.5" stroke="#e01818" stroke-width="1.9" fill="none"/><path d="M0.5 28H27" stroke="#111" stroke-width="1.3"/><path d="M24 25.5 L29 28 L24 30.5Z" fill="#111"/></svg>
<div class="a" style="left:164px;top:362.5px;width:57px;height:1px;background:#c9c5b6"></div>
<div class="t" style="left:167px;top:368.3px;font-size:8.8px;font-weight:bold;color:#111;transform-origin:0 0;transform:scaleX(0.915)">Output Value</div>
<div class="a" style="left:159px;top:400.5px;width:641px;height:1.5px;background:#9c9a92"></div>
<div class="a" style="left:223.3px;top:172.5px;width:573.0px;height:224.8px;background:#fff"></div>
<div class="a" style="left:224.3px;top:173.5px;width:571.0px;height:13.8px;background:#ede9dd"></div>
<div class="a" style="left:224.3px;top:173.5px;width:35.5px;height:222.8px;background:#ede9dd"></div>
<svg class="a" style="left:0;top:0;opacity:0.85" width="800" height="402"><g fill="#f4c4c0"><path fill-rule="evenodd" d="M172 151H197Q208.5 151 208.5 161.5Q208.5 172 197 172H181.5V183.5H172Z M181.5 158.5V164.5H194Q198.5 164.5 198.5 161.5Q198.5 158.5 194 158.5Z"/><rect x="212.5" y="151" width="9" height="32.5"/><path fill-rule="evenodd" d="M228 151.5L312.5 150.5L299 168L258 197L237 218.5L223.5 218.5L223.5 186L231 183L231 177L234 170.5L226 156Q225 152 228 151.5Z M260 163.5L281 165.8L260 171Z"/><path fill-rule="evenodd" d="M312.2 152.0 L322.8 152.0 L341.8 183.5 L331.7 183.5 L327.9 177.3 L306.3 177.3 L302.7 183.5 L294.3 183.5Z M317.5 158.0 L324.0 170.2 L310.5 170.2Z"/><path d="M344 183.5V151H355L379 172V151H389V183.5H378L354 162.5V183.5Z"/><path d="M391.7 151H400.6V164.3H425.4V151H434.3V183.5H425.4V171.1H400.6V183.5H391.7Z"/><path fill-rule="evenodd" d="M453.2 152.0 L463.8 152.0 L482.8 183.5 L472.7 183.5 L468.9 177.3 L447.3 177.3 L443.7 183.5 L435.3 183.5Z M458.5 158.0 L465.0 170.2 L451.5 170.2Z"/><text x="0" y="0" textLength="372" lengthAdjust="spacingAndGlyphs" font-family="Liberation Sans" font-weight="bold" font-style="italic" font-size="43" transform="translate(300,222) skewX(-10)">RACEWERKS</text></g></svg>
<div class="a" style="left:258.8px;top:173.6px;width:33.0px;height:13.2px;background:#919c78"></div>
<div class="a" style="left:258.8px;top:187.4px;width:33.0px;height:10.6px;background:#ec1c16"></div>
<div class="a" style="left:291.8px;top:187.4px;width:33.0px;height:10.6px;background:#7ce014"></div>
<div class="a" style="left:324.8px;top:187.4px;width:33.0px;height:10.6px;background:#2ee060"></div>
<div class="a" style="left:357.8px;top:187.4px;width:33.2px;height:10.6px;background:#2ee060"></div>
<div class="a" style="left:258.8px;top:199.2px;width:33.0px;height:10.6px;background:#ec1c16"></div>
<div class="a" style="left:291.8px;top:199.2px;width:33.0px;height:10.6px;background:#f4c414"></div>
<div class="a" style="left:324.8px;top:199.2px;width:33.0px;height:10.6px;background:#5edc24"></div>
<div class="a" style="left:357.8px;top:199.2px;width:33.2px;height:10.6px;background:#84e01c"></div>
<div class="a" style="left:258.8px;top:211.0px;width:33.0px;height:10.6px;background:#ec1c16"></div>
<div class="a" style="left:291.8px;top:211.0px;width:33.0px;height:10.6px;background:#f06818"></div>
<div class="a" style="left:324.8px;top:211.0px;width:33.0px;height:10.6px;background:#c8d41c"></div>
<div class="a" style="left:357.8px;top:211.0px;width:33.2px;height:10.6px;background:#78dc1c"></div>
<div class="a" style="left:258.8px;top:222.8px;width:33.0px;height:10.6px;background:#ec1c16"></div>
<div class="a" style="left:291.8px;top:222.8px;width:33.0px;height:10.6px;background:#ee4418"></div>
<div class="a" style="left:324.8px;top:222.8px;width:33.0px;height:10.6px;background:#f2c81c"></div>
<div class="a" style="left:357.8px;top:222.8px;width:33.2px;height:10.6px;background:#b0e41c"></div>
<div class="a" style="left:224.3px;top:234.6px;width:35.5px;height:10.4px;background:#c48c84"></div>
<div class="a" style="left:258.8px;top:234.6px;width:33.0px;height:10.4px;background:#020a98"></div>
<div class="a" style="left:291.8px;top:234.6px;width:33.0px;height:10.4px;background:#ec1c16"></div>
<div class="a" style="left:324.8px;top:234.6px;width:33.0px;height:10.4px;background:#f4b81c"></div>
<div class="a" style="left:357.8px;top:234.6px;width:33.2px;height:10.4px;background:#e0e41c"></div>
<svg class="a" style="left:0;top:0;mix-blend-mode:multiply" width="800" height="402"><defs><clipPath id="cc"><rect x="258.8" y="187" width="132.2" height="58.6"/></clipPath></defs><g clip-path="url(#cc)"><g fill="#f5d6d4"><path fill-rule="evenodd" d="M172 151H197Q208.5 151 208.5 161.5Q208.5 172 197 172H181.5V183.5H172Z M181.5 158.5V164.5H194Q198.5 164.5 198.5 161.5Q198.5 158.5 194 158.5Z"/><rect x="212.5" y="151" width="9" height="32.5"/><path fill-rule="evenodd" d="M228 151.5L312.5 150.5L299 168L258 197L237 218.5L223.5 218.5L223.5 186L231 183L231 177L234 170.5L226 156Q225 152 228 151.5Z M260 163.5L281 165.8L260 171Z"/><path fill-rule="evenodd" d="M312.2 152.0 L322.8 152.0 L341.8 183.5 L331.7 183.5 L327.9 177.3 L306.3 177.3 L302.7 183.5 L294.3 183.5Z M317.5 158.0 L324.0 170.2 L310.5 170.2Z"/><path d="M344 183.5V151H355L379 172V151H389V183.5H378L354 162.5V183.5Z"/><path d="M391.7 151H400.6V164.3H425.4V151H434.3V183.5H425.4V171.1H400.6V183.5H391.7Z"/><path fill-rule="evenodd" d="M453.2 152.0 L463.8 152.0 L482.8 183.5 L472.7 183.5 L468.9 177.3 L447.3 177.3 L443.7 183.5 L435.3 183.5Z M458.5 158.0 L465.0 170.2 L451.5 170.2Z"/><text x="0" y="0" textLength="372" lengthAdjust="spacingAndGlyphs" font-family="Liberation Sans" font-weight="bold" font-style="italic" font-size="43" transform="translate(300,222) skewX(-10)">RACEWERKS</text></g></g></svg>
<div class="a" style="left:223.3px;top:172.5px;width:573.0px;height:224.8px;border:1px solid #b0c0ca;border-top-color:#a8b8c4;border-left-color:#a0b0bc"></div>
<div class="a" style="left:224.3px;top:186.3px;width:571.0px;height:1px;background:#d4d0c4"></div>
<div class="a" style="left:258.3px;top:245.6px;width:1px;height:150.7px;background:#dcd8cc"></div>
<div class="t" style="left:258.8px;top:177.2px;width:31.5px;text-align:right;font-size:8.2px;font-weight:bold;color:#1b2410">0.0</div>
<div class="t" style="left:291.8px;top:177.2px;width:31.5px;text-align:right;font-size:8.2px;font-weight:bold;color:#111">14.0</div>
<div class="t" style="left:324.8px;top:177.2px;width:31.5px;text-align:right;font-size:8.2px;font-weight:bold;color:#111">16.0</div>
<div class="t" style="left:357.8px;top:177.2px;width:31.7px;text-align:right;font-size:8.2px;font-weight:bold;color:#111">18.0</div>
<div class="t" style="left:223.8px;top:189.2px;width:33px;text-align:right;font-size:8.6px;font-weight:bold;color:#2a2220">7000</div>
<div class="t" style="left:258.8px;top:189.2px;width:31.5px;text-align:right;font-size:8.8px;color:#6a0000;transform-origin:100% 0;transform:scaleX(0.84)">0.0</div>
<div class="t" style="left:291.8px;top:189.2px;width:31.5px;text-align:right;font-size:8.8px;color:#1a2a00;transform-origin:100% 0;transform:scaleX(0.84)">40.0</div>
<div class="t" style="left:324.8px;top:189.2px;width:31.5px;text-align:right;font-size:8.8px;color:#0a2a10;transform-origin:100% 0;transform:scaleX(0.84)">62.0</div>
<div class="t" style="left:357.8px;top:189.2px;width:31.7px;text-align:right;font-size:8.8px;color:#0a2a10;transform-origin:100% 0;transform:scaleX(0.84)">62.0</div>
<div class="a" style="left:224.3px;top:198.1px;width:167.7px;height:1px;background:#e2ddd4;opacity:0.7"></div>
<div class="a" style="left:391.0px;top:198.1px;width:404.3px;height:0;border-top:1px dotted #e8e6e0"></div>
<div class="t" style="left:223.8px;top:201.0px;width:33px;text-align:right;font-size:8.6px;font-weight:bold;color:#2a2220">6000</div>
<div class="t" style="left:258.8px;top:201.0px;width:31.5px;text-align:right;font-size:8.8px;color:#6a0000;transform-origin:100% 0;transform:scaleX(0.84)">0.0</div>
<div class="t" style="left:291.8px;top:201.0px;width:31.5px;text-align:right;font-size:8.8px;color:#2a2000;transform-origin:100% 0;transform:scaleX(0.84)">27.0</div>
<div class="t" style="left:324.8px;top:201.0px;width:31.5px;text-align:right;font-size:8.8px;color:#0a2a00;transform-origin:100% 0;transform:scaleX(0.84)">41.0</div>
<div class="t" style="left:357.8px;top:201.0px;width:31.7px;text-align:right;font-size:8.8px;color:#1a2a00;transform-origin:100% 0;transform:scaleX(0.84)">44.0</div>
<div class="a" style="left:224.3px;top:209.9px;width:167.7px;height:1px;background:#e2ddd4;opacity:0.7"></div>
<div class="a" style="left:391.0px;top:209.9px;width:404.3px;height:0;border-top:1px dotted #e8e6e0"></div>
<div class="t" style="left:223.8px;top:212.8px;width:33px;text-align:right;font-size:8.6px;font-weight:bold;color:#2a2220">4000</div>
<div class="t" style="left:258.8px;top:212.8px;width:31.5px;text-align:right;font-size:8.8px;color:#6a0000;transform-origin:100% 0;transform:scaleX(0.84)">0.0</div>
<div class="t" style="left:291.8px;top:212.8px;width:31.5px;text-align:right;font-size:8.8px;color:#3a1000;transform-origin:100% 0;transform:scaleX(0.84)">10.0</div>
<div class="t" style="left:324.8px;top:212.8px;width:31.5px;text-align:right;font-size:8.8px;color:#2a2a00;transform-origin:100% 0;transform:scaleX(0.84)">31.7</div>
<div class="t" style="left:357.8px;top:212.8px;width:31.7px;text-align:right;font-size:8.8px;color:#1a2a00;transform-origin:100% 0;transform:scaleX(0.84)">39.7</div>
<div class="a" style="left:224.3px;top:221.7px;width:167.7px;height:1px;background:#e2ddd4;opacity:0.7"></div>
<div class="a" style="left:391.0px;top:221.7px;width:404.3px;height:0;border-top:1px dotted #e8e6e0"></div>
<div class="t" style="left:223.8px;top:224.6px;width:33px;text-align:right;font-size:8.6px;font-weight:bold;color:#2a2220">2000</div>
<div class="t" style="left:258.8px;top:224.6px;width:31.5px;text-align:right;font-size:8.8px;color:#6a0000;transform-origin:100% 0;transform:scaleX(0.84)">0.0</div>
<div class="t" style="left:291.8px;top:224.6px;width:31.5px;text-align:right;font-size:8.8px;color:#3a0800;transform-origin:100% 0;transform:scaleX(0.84)">5.0</div>
<div class="t" style="left:324.8px;top:224.6px;width:31.5px;text-align:right;font-size:8.8px;color:#2a2000;transform-origin:100% 0;transform:scaleX(0.84)">24.3</div>
<div class="t" style="left:357.8px;top:224.6px;width:31.7px;text-align:right;font-size:8.8px;color:#1a2a00;transform-origin:100% 0;transform:scaleX(0.84)">33.3</div>
<div class="a" style="left:224.3px;top:233.5px;width:167.7px;height:1px;background:#e2ddd4;opacity:0.7"></div>
<div class="a" style="left:391.0px;top:233.5px;width:404.3px;height:0;border-top:1px dotted #e8e6e0"></div>
<div class="t" style="left:223.8px;top:236.4px;width:33px;text-align:right;font-size:8.6px;font-weight:bold;color:#3a1414">0</div>
<div class="t" style="left:258.8px;top:236.4px;width:31.5px;text-align:right;font-size:8.8px;color:#ffffff;transform-origin:100% 0;transform:scaleX(0.84)">0.0</div>
<div class="t" style="left:291.8px;top:236.4px;width:31.5px;text-align:right;font-size:8.8px;color:#6a0000;transform-origin:100% 0;transform:scaleX(0.84)">0.0</div>
<div class="t" style="left:324.8px;top:236.4px;width:31.5px;text-align:right;font-size:8.8px;color:#2a2000;transform-origin:100% 0;transform:scaleX(0.84)">22.0</div>
<div class="t" style="left:357.8px;top:236.4px;width:31.7px;text-align:right;font-size:8.8px;color:#2a2a00;transform-origin:100% 0;transform:scaleX(0.84)">29.0</div>
<div class="a" style="left:224.3px;top:245.1px;width:167.7px;height:1px;background:#e2ddd4;opacity:0.7"></div>
<div class="a" style="left:391.0px;top:245.1px;width:404.3px;height:0;border-top:1px dotted #e8e6e0"></div>
<div class="a" style="left:258.8px;top:256.8px;width:536.5px;height:0;border-top:1px dotted #ecece8"></div>
<div class="a" style="left:258.8px;top:268.5px;width:536.5px;height:1px;background:#f4f3ee"></div>
<div class="a" style="left:258.8px;top:280.1px;width:536.5px;height:0;border-top:1px dotted #ecece8"></div>
<div class="a" style="left:258.8px;top:291.8px;width:536.5px;height:1px;background:#f4f3ee"></div>
<div class="a" style="left:258.8px;top:303.5px;width:536.5px;height:0;border-top:1px dotted #ecece8"></div>
<div class="a" style="left:258.8px;top:315.2px;width:536.5px;height:1px;background:#f4f3ee"></div>
<div class="a" style="left:258.8px;top:326.9px;width:536.5px;height:0;border-top:1px dotted #ecece8"></div>
<div class="a" style="left:258.8px;top:338.5px;width:536.5px;height:1px;background:#f4f3ee"></div>
<div class="a" style="left:258.8px;top:350.2px;width:536.5px;height:0;border-top:1px dotted #ecece8"></div>
<div class="a" style="left:258.8px;top:361.9px;width:536.5px;height:1px;background:#f4f3ee"></div>
<div class="a" style="left:258.8px;top:373.6px;width:536.5px;height:0;border-top:1px dotted #ecece8"></div>
<div class="a" style="left:258.8px;top:385.3px;width:536.5px;height:1px;background:#f4f3ee"></div>
<div class="a" style="left:258.8px;top:396.9px;width:536.5px;height:0;border-top:1px dotted #ecece8"></div>
<div class="a" style="left:291.3px;top:245.6px;width:1px;height:150.7px;background:#f5f3ee"></div>
<div class="a" style="left:324.3px;top:245.6px;width:1px;height:150.7px;background:#f5f3ee"></div>
<div class="a" style="left:357.3px;top:245.6px;width:1px;height:150.7px;background:#f5f3ee"></div>
<div class="a" style="left:390.5px;top:245.6px;width:1px;height:150.7px;background:#f5f3ee"></div>
<div class="t" style="left:262px;top:149.8px;font-size:9.4px;font-weight:bold;color:#237a1e;transform-origin:0 0;transform:scaleX(0.978)">Target Boost Level</div>
<div class="t" style="left:350px;top:149.8px;font-size:9.2px;color:#302a2a;transform-origin:0 0;transform:scaleX(0.95)">psi / inHg</div>
</body></html>
